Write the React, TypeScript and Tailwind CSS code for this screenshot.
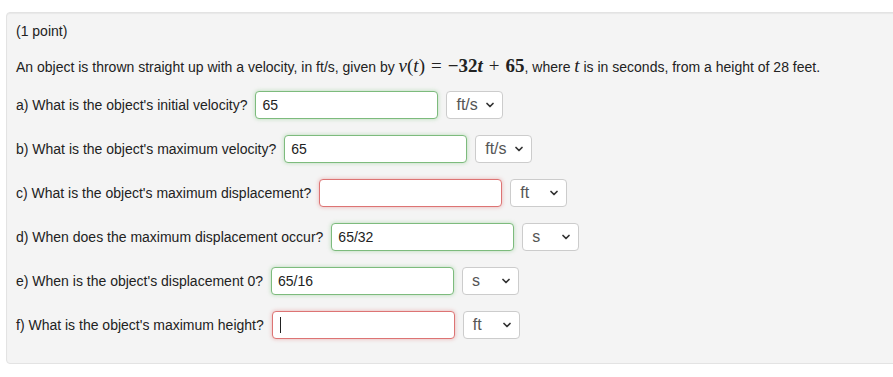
import { ChevronDown } from "lucide-react";

type Row = { label: string; value: string; unit: string; ok: boolean; caret?: boolean };

const rows: Row[] = [
  { label: "a) What is the object's initial velocity?", value: "65", unit: "ft/s", ok: true },
  { label: "b) What is the object's maximum velocity?", value: "65", unit: "ft/s", ok: true },
  { label: "c) What is the object's maximum displacement?", value: "", unit: "ft", ok: false },
  { label: "d) When does the maximum displacement occur?", value: "65/32", unit: "s", ok: true },
  { label: "e) When is the object's displacement 0?", value: "65/16", unit: "s", ok: true },
  { label: "f) What is the object's maximum height?", value: "", unit: "ft", ok: false, caret: true },
];

const mathFont = { fontFamily: '"Liberation Serif", "Times New Roman", serif' };

function Answer({ r }: { r: Row }) {
  return (
    <div className="flex items-center h-[28px]">
      <span className="mr-[8px] whitespace-nowrap">{r.label}</span>
      <div
        className={
          r.ok
            ? "w-[183px] h-[28px] bg-white rounded-[4px] border border-[#7dbb7d] shadow-[0_0_4px_rgba(92,184,92,0.4)] flex items-center px-[6px] mr-[8px]"
            : "w-[183px] h-[28px] bg-white rounded-[4px] border border-[#dd7474] shadow-[0_0_4px_rgba(217,83,79,0.4)] flex items-center px-[6px] mr-[8px]"
        }
      >
        <span className="text-[#222]">{r.value}</span>
        {r.caret && <span className="w-[1px] h-[16px] bg-[#222] ml-[1px]" />}
      </div>
      <div className="w-[57px] h-[28px] bg-white rounded-[4px] border border-[#cccccc] flex items-center justify-between pl-[9px] pr-[6px]">
        <span className="text-[#555] text-[16px]">{r.unit}</span>
        <ChevronDown size={12} strokeWidth={3.5} className="text-[#333]" />
      </div>
    </div>
  );
}

export default function App() {
  return (
    <div
      className="w-[893px] h-[377px] bg-white overflow-hidden pt-[12px] pl-[6px]"
      style={{ fontFamily: '"Liberation Sans", Arial, sans-serif' }}
    >
      <div className="w-[900px] h-[352px] bg-[#f4f4f4] border border-[#e3e3e3] rounded-[4px] shadow-[inset_0_1px_1px_rgba(0,0,0,0.05)] pl-[9px] pt-[8px] text-[14px] text-[#222]">
        <div className="leading-[20px]">(1 point)</div>
        <div className="leading-[20px] mt-[15px] flex items-baseline whitespace-nowrap">
          <span>An object is thrown straight up with a velocity, in ft/s, given by&nbsp;</span>
          <span className="text-[19px]" style={mathFont}>
            <i>v</i>(<i>t</i>)<span className="mx-[6px]">=</span>
            <b>−32<i>t</i></b>
            <span className="mx-[6px]">+</span>
            <b>65</b>
          </span>
          <span>, where&nbsp;</span>
          <i className="text-[19px]" style={mathFont}>
            t
          </i>
          <span>&nbsp;is in seconds, from a height of 28 feet.</span>
        </div>
        <div className="mt-[14px] flex flex-col gap-[16px]">
          {rows.map((r) => (
            <Answer key={r.label} r={r} />
          ))}
        </div>
      </div>
    </div>
  );
}
